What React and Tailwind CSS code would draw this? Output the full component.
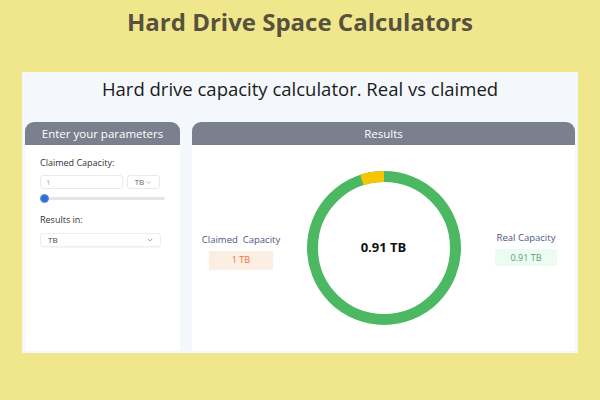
import { ChevronDown } from "lucide-react";

const font = { fontFamily: "'Open Sans', 'Liberation Sans', sans-serif" };

const Donut = () => {
    const r = 71.5;
    const c = 2 * Math.PI * r;
    const lost = c * 0.05;
    return (
        <div className="relative flex h-[156px] w-[156px] items-center justify-center">
            <svg width="156" height="156" viewBox="0 0 156 156" className="absolute inset-0">
                <circle cx="78" cy="78" r={r} fill="none" stroke="#4cb862" strokeWidth="11" />
                <circle
                    cx="78"
                    cy="78"
                    r={r}
                    fill="none"
                    stroke="#f7c600"
                    strokeWidth="11"
                    strokeDasharray={`${lost} ${c}`}
                    transform="rotate(-108 78 78)"
                />
            </svg>
            <span className="relative text-[13px] font-bold text-[#111]">0.91 TB</span>
        </div>
    );
};

const CardHeader = ({ children }) => (
    <div className="flex h-[23px] items-center justify-center rounded-t-[9px] bg-[#7a808e] text-[11.5px] text-white">
        {children}
    </div>
);

export default function App() {
    return (
        <div className="flex h-[400px] w-[600px] flex-col bg-[#f0e68c]" style={font}>
            <h1 className="pt-[6px] text-center text-[24px] font-bold leading-[32px] text-[#57523d]">
                Hard Drive Space Calculators
            </h1>

            <div className="mx-[22px] mt-[34px] flex h-[281px] flex-col bg-[#f4f8fd] px-[3px] pb-[2px]">
                <h2 className="pt-[4px] text-center text-[18.5px] leading-[26px] text-[#1a1a1a]">
                    Hard drive capacity calculator. Real vs claimed
                </h2>

                <div className="mt-[20px] flex flex-1 gap-[12px]">
                    <div className="flex w-[155px] flex-col rounded-t-[9px] bg-white">
                        <CardHeader>Enter your parameters</CardHeader>
                        <div className="flex flex-col px-[15px] pt-[12px] text-[9px] text-[#333]">
                            <label className="leading-[12px]">Claimed Capacity:</label>
                            <div className="mt-[6px] flex gap-[4px]">
                                <div className="flex h-[14px] w-[83px] items-center rounded-[3px] border border-[#e8eaee] px-[5px] text-[8px] text-[#aaa]">
                                    1
                                </div>
                                <div className="flex h-[14px] w-[33px] items-center justify-center gap-[1px] rounded-[3px] border border-[#e8eaee] text-[8px] text-[#666]">
                                    TB
                                    <ChevronDown size={7} strokeWidth={2} className="text-[#888]" />
                                </div>
                            </div>
                            <div className="relative mt-[5px] flex h-[8px] items-center">
                                <div className="h-[3px] w-full rounded-full bg-[#e3e5e9]" />
                                <div className="absolute left-0 h-[9px] w-[9px] rounded-full border border-[#5a8fe0] bg-[#2f6fd8]" />
                            </div>
                            <label className="mt-[12px] leading-[12px]">Results in:</label>
                            <div className="mt-[7px] flex h-[14px] w-[121px] items-center justify-between rounded-[3px] border border-[#eceef1] pl-[7px] pr-[6px] text-[8px] text-[#444] shadow-[0_1px_1px_rgba(0,0,0,0.04)]">
                                TB
                                <ChevronDown size={8} strokeWidth={2} className="text-[#6b7fd0]" />
                            </div>
                        </div>
                    </div>

                    <div className="flex flex-1 flex-col rounded-t-[9px] bg-white">
                        <CardHeader>Results</CardHeader>
                        <div className="flex flex-1 items-center justify-between">
                            <div className="flex w-[98px] flex-col items-center pt-[7px]">
                                <span className="text-[9.5px] leading-[12px] text-[#4a5580]">Claimed&nbsp; Capacity</span>
                                <span className="mt-[5px] flex h-[19px] w-[64px] items-center justify-center bg-[#fdeee3] text-[9px] text-[#e8743b]">
                                    1 TB
                                </span>
                            </div>
                            <Donut />
                            <div className="flex w-[98px] flex-col items-center pt-[2px]">
                                <span className="text-[9.5px] leading-[12px] text-[#4a5580]">Real Capacity</span>
                                <span className="mt-[5px] flex h-[17px] w-[62px] items-center justify-center bg-[#edfcf2] text-[9px] text-[#5a9e6a]">
                                    0.91 TB
                                </span>
                            </div>
                        </div>
                    </div>
                </div>
            </div>
        </div>
    );
}
